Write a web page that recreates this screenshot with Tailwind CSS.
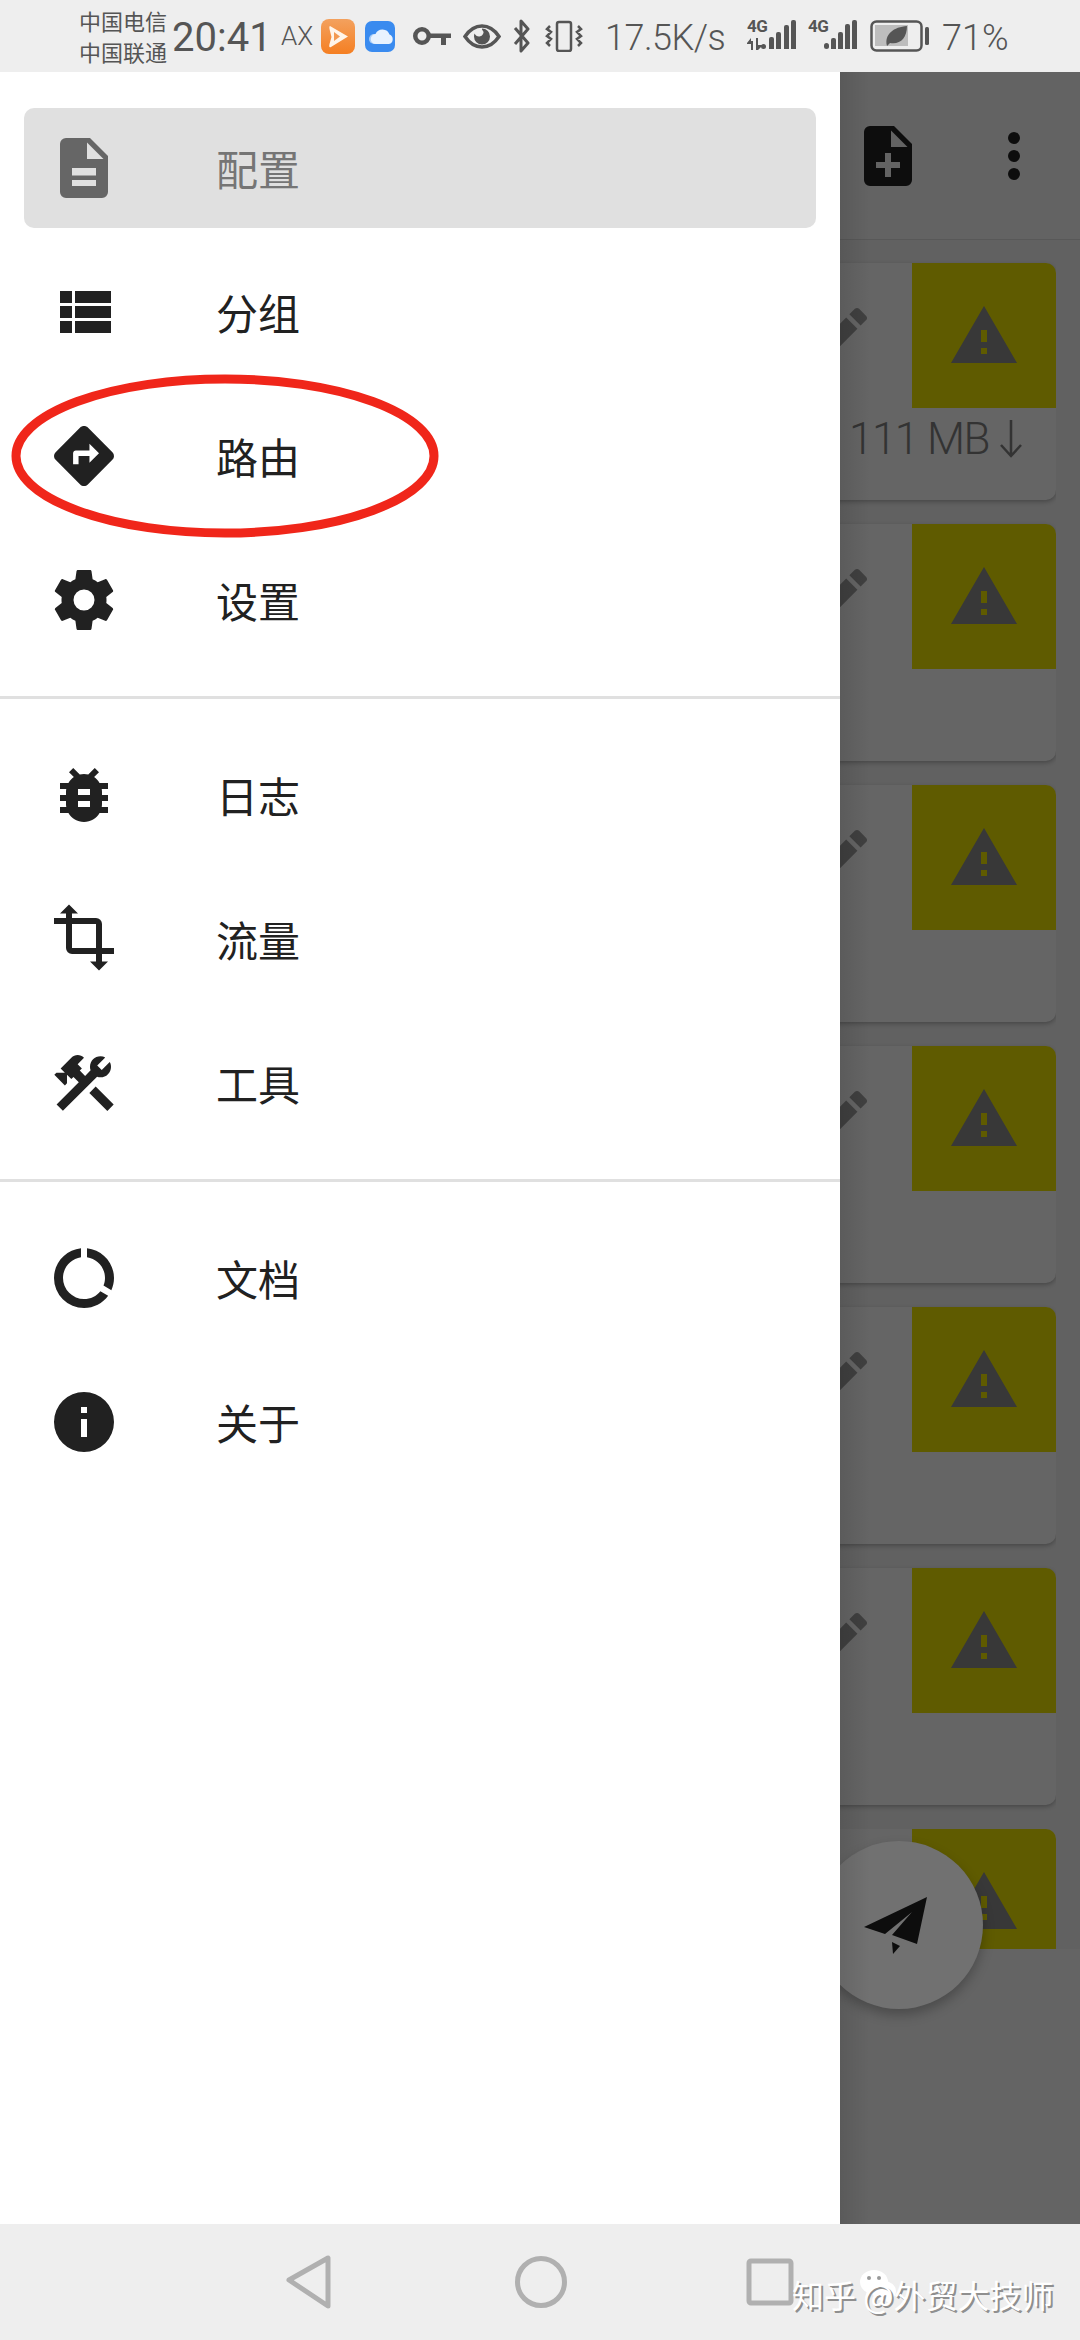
<!DOCTYPE html>
<html lang="zh">
<head>
    <meta charset="UTF-8">
    <meta name="viewport" content="width=device-width, initial-scale=1.0">
    <title>Drawer</title>
    <script src="https://cdn.jsdelivr.net/npm/@tailwindcss/browser@4"></script>
</head>
<body class="bg-[#eeeeee] font-['Noto_Sans_CJK_SC',sans-serif]">
<div class="relative w-[1080px] h-[2340px] overflow-hidden flex flex-col">

    <!-- Status bar -->
    <header class="h-[72px] bg-[#eeeeee] flex items-center text-[#555555] shrink-0">
        <div class="ml-[79px] w-[88px] shrink-0 flex flex-col text-[22px] leading-[31px] font-['Noto_Sans_CJK_SC',sans-serif]">
            <span>中国电信</span>
            <span>中国联通</span>
        </div>
        <span class="ml-[5px] w-[98px] shrink-0 text-[40px] leading-none font-['Roboto',sans-serif] pt-[4px]">20:41</span>
        <span class="ml-[11px] w-[31px] shrink-0 text-[26px] leading-none font-['Roboto',sans-serif] font-light">AX</span>
        <!-- orange app -->
        <svg class="ml-[9px] w-[34px] h-[35px] shrink-0" viewBox="0 0 34 35">
            <defs><linearGradient id="og" x1="0" y1="0" x2="0" y2="1"><stop offset="0" stop-color="#f3a15e"/><stop offset="1" stop-color="#f57f22"/></linearGradient></defs>
            <rect width="34" height="35" rx="8" fill="url(#og)"/>
            <path d="M9 7l18 10.500L10 28c-2 1-2-1-1.500-3l2-7-2-8c-.3-2 0-3 .5-3z" fill="#fff5ea"/>
            <path d="M13 13l6 4.500-6 4.500z" fill="#f39a52"/>
        </svg>
        <!-- blue app -->
        <svg class="ml-[10px] w-[30px] h-[31px] shrink-0" viewBox="0 0 30 31">
            <rect width="30" height="31" rx="7" fill="#3a8bef"/>
            <circle cx="9" cy="18" r="5" fill="#a9cdf7"/>
            <path d="M11 23a5 5 0 0 1-.5-10 7.500 7.500 0 0 1 14 .5A5 5 0 0 1 24 23z" fill="#e8f2fe"/>
        </svg>
        <!-- key -->
        <svg class="ml-[18px] w-[38px] h-[18px] shrink-0" viewBox="0 0 38 18" fill="#555555">
            <path fill-rule="evenodd" d="M9 0a9 9 0 1 1 0 18A9 9 0 0 1 9 0zm0 4.500a4.500 4.500 0 1 0 0 9 4.500 4.500 0 0 0 0-9z"/>
            <path d="M16 6.500h22v4.500h-5v7h-5v-7H16z"/>
        </svg>
        <!-- eye -->
        <svg class="ml-[12px] w-[38px] h-[25px] shrink-0" viewBox="0 0 38 25">
            <path d="M2 12.500C7 5 13 2 19 2s12 3 17 10.500C31 20 25 23 19 23S7 20 2 12.500z" fill="none" stroke="#555555" stroke-width="3.500"/>
            <path fill-rule="evenodd" d="M19 4.500a8 8 0 1 1-8 8c0-1 .2-2 .5-3 1 2 2.500 3 4.500 3a4 4 0 0 0 3-7z" fill="#555555"/>
        </svg>
        <!-- bluetooth -->
        <svg class="ml-[12px] w-[17px] h-[34px] shrink-0" viewBox="0 0 17 34" fill="none" stroke="#555555" stroke-width="3" stroke-linejoin="round">
            <path d="M2 9l13 15-7 8V2l7 8L2 25"/>
        </svg>
        <!-- vibrate -->
        <svg class="ml-[15px] w-[38px] h-[32px] shrink-0" viewBox="0 0 38 32" fill="none" stroke="#555555" stroke-width="2.500">
            <rect x="12" y="2" width="14" height="29" rx="2"/>
            <path d="M5 6L2 9l4 3-4 4 4 3-4 4 3 3M33 6l3 3-4 3 4 4-4 3 4 4-3 3"/>
        </svg>
        <span class="ml-[22px] w-[119px] shrink-0 text-[36px] tracking-[-0.5px] leading-none font-['Roboto',sans-serif] font-light pt-[3px] whitespace-nowrap">17.5K/s</span>
        <!-- signal 1 -->
        <div class="relative ml-[23px] w-[49px] h-[32px] shrink-0">
            <span class="absolute left-0 top-[-2px] text-[17px] leading-[17px] font-bold font-['Roboto',sans-serif] tracking-[-0.5px]">4G</span>
            <svg class="absolute left-0 top-[18px] w-[17px] h-[12px]" viewBox="0 0 17 12" fill="#555555">
                <path d="M0 5l4-5v3h2v9H4V6H0zM9 0h2v7h5l-5 5H9z"/>
            </svg>
            <div class="absolute right-0 bottom-[3px] flex items-end gap-[2.5px]">
                <i class="block w-[5px] h-[5px] rounded-full bg-[#555555]"></i>
                <i class="block w-[5px] h-[12px] rounded-t-[2px] bg-[#555555]"></i>
                <i class="block w-[5px] h-[17px] rounded-t-[2px] bg-[#555555]"></i>
                <i class="block w-[5px] h-[24px] rounded-t-[2px] bg-[#555555]"></i>
                <i class="block w-[5px] h-[29px] rounded-t-[2px] bg-[#555555]"></i>
            </div>
        </div>
        <!-- signal 2 -->
        <div class="relative ml-[12px] w-[49px] h-[32px] shrink-0">
            <span class="absolute left-0 top-[-2px] text-[17px] leading-[17px] font-bold font-['Roboto',sans-serif] tracking-[-0.5px]">4G</span>
            <div class="absolute right-0 bottom-[3px] flex items-end gap-[2px]">
                <i class="block w-[5px] h-[6px] rounded-full bg-[#555555]"></i>
                <i class="block w-[5px] h-[11px] rounded-t-[2px] bg-[#555555]"></i>
                <i class="block w-[5px] h-[17px] rounded-t-[2px] bg-[#555555]"></i>
                <i class="block w-[5px] h-[25px] rounded-t-[2px] bg-[#555555]"></i>
                <i class="block w-[5px] h-[29px] rounded-t-[2px] bg-[#555555]"></i>
            </div>
        </div>
        <!-- battery -->
        <svg class="ml-[13px] w-[59px] h-[32px] shrink-0" viewBox="0 0 59 32">
            <rect x="1.500" y="1.500" width="50" height="29" rx="5" fill="none" stroke="#555555" stroke-width="2.500"/>
            <rect x="5" y="5" width="33" height="21" fill="#bdbdbd"/>
            <path d="M17 26c-3-12 7-19 20-20 0 12-7 19-17 17z" fill="#555555"/>
            <rect x="55" y="7" width="4" height="18" rx="1.500" fill="#555555"/>
        </svg>
        <span class="ml-[13px] text-[36px] leading-none font-['Roboto',sans-serif] font-light pt-[3px]">71%</span>
    </header>

    <!-- Main -->
    <main class="flex flex-1 min-h-0">
        <!-- Drawer -->
        <aside class="relative w-[840px] shrink-0 bg-white pt-[24px] text-[42px] leading-none text-[#212121]">
            <nav class="flex flex-col">
                <a class="relative h-[144px] flex items-center text-[#757575]">
                    <span class="absolute left-[24px] right-[24px] top-[12px] h-[120px] bg-[#e0e0e0] rounded-[10px]"></span>
                    <svg class="relative ml-[48px] w-[72px] h-[72px]" viewBox="0 0 24 24" fill="#666666" fill-rule="evenodd"><path d="M14 2H6a2 2 0 0 0-2 2v16a2 2 0 0 0 2 2h12a2 2 0 0 0 2-2V8l-6-6zM13 9V3.500L18.500 9H13zM8 12h8v2.500H8zM8 16h8v2H8z"/></svg>
                    <span class="relative ml-[96px]">配置</span>
                </a>
                <a class="h-[144px] flex items-center">
                    <svg class="ml-[48px] w-[72px] h-[72px]" viewBox="0 0 24 24" fill="#212121"><path d="M9,5V9H21V5M9,19H21V15H9M9,14H21V10H9M4,9H8V5H4M4,19H8V15H4M4,14H8V10H4V14Z"/></svg>
                    <span class="ml-[96px]">分组</span>
                </a>
                <a class="h-[144px] flex items-center">
                    <svg class="ml-[48px] w-[72px] h-[72px]" viewBox="-1.200 -1.200 26.400 26.400" fill="#212121"><path d="M22.430 10.590l-9.010-9.010c-.75-.75-2.070-.76-2.830 0l-9 9c-.78.78-.78 2.040 0 2.830l9 9c.39.39.9.59 1.410.59.51 0 1.020-.2 1.410-.59l8.990-8.990c.79-.76.8-2.020.03-2.830zM14 14.500V12h-4v3H8v-4c0-.55.45-1 1-1h5V7.500l3.500 3.500-3.500 3.500z"/></svg>
                    <span class="ml-[96px]">路由</span>
                </a>
                <a class="h-[144px] flex items-center">
                    <svg class="ml-[48px] w-[72px] h-[72px]" viewBox="0 0 24 24" fill="#212121"><path d="M12,15.500A3.500,3.500 0 0,1 8.500,12A3.500,3.500 0 0,1 12,8.500A3.500,3.500 0 0,1 15.500,12A3.500,3.500 0 0,1 12,15.500M19.430,12.970C19.470,12.650 19.500,12.330 19.500,12C19.500,11.670 19.470,11.340 19.430,11L21.540,9.370C21.730,9.220 21.780,8.950 21.660,8.730L19.660,5.270C19.540,5.050 19.270,4.960 19.050,5.050L16.560,6.050C16.040,5.660 15.500,5.320 14.870,5.070L14.500,2.420C14.460,2.180 14.250,2 14,2H10C9.750,2 9.540,2.180 9.500,2.420L9.130,5.070C8.500,5.320 7.960,5.660 7.440,6.050L4.950,5.050C4.730,4.960 4.460,5.050 4.340,5.270L2.340,8.730C2.210,8.950 2.270,9.220 2.460,9.370L4.570,11C4.530,11.340 4.500,11.670 4.500,12C4.500,12.330 4.530,12.650 4.570,12.970L2.460,14.630C2.270,14.780 2.210,15.050 2.340,15.270L4.340,18.730C4.460,18.950 4.730,19.030 4.950,18.950L7.440,17.940C7.960,18.340 8.500,18.680 9.130,18.930L9.500,21.580C9.540,21.820 9.750,22 10,22H14C14.250,22 14.460,21.820 14.500,21.580L14.870,18.930C15.500,18.670 16.040,18.340 16.560,17.940L19.050,18.950C19.270,19.030 19.540,18.950 19.660,18.730L21.660,15.270C21.780,15.050 21.730,14.780 21.540,14.630L19.430,12.970Z"/></svg>
                    <span class="ml-[96px]">设置</span>
                </a>
            </nav>

            <hr class="my-[24px] border-t-[3px] border-[#e0e0e0]">

            <nav class="flex flex-col">
                <a class="h-[144px] flex items-center">
                    <svg class="ml-[48px] w-[72px] h-[72px]" viewBox="0 0 24 24" fill="#212121"><path d="M14,12H10V10H14M14,16H10V14H14M20,8H17.190C16.740,7.220 16.120,6.550 15.370,6.040L17,4.410L15.590,3L13.420,5.170C12.960,5.060 12.500,5 12,5C11.500,5 11.040,5.060 10.590,5.170L8.410,3L7,4.410L8.620,6.040C7.880,6.550 7.260,7.220 6.810,8H4V10H6.090C6.040,10.330 6,10.660 6,11V12H4V14H6V15C6,15.340 6.040,15.670 6.090,16H4V18H6.810C7.850,19.790 9.780,21 12,21C14.220,21 16.150,19.790 17.190,18H20V16H17.910C17.960,15.670 18,15.340 18,15V14H20V12H18V11C18,10.660 17.960,10.330 17.910,10H20V8Z"/></svg>
                    <span class="ml-[96px]">日志</span>
                </a>
                <a class="h-[144px] flex items-center">
                    <svg class="ml-[48px] w-[72px] h-[72px]" viewBox="0 0 24 24" fill="#212121" fill-rule="evenodd"><path d="M7 .5L10 3.500H8V5h8a2 2 0 0 1 2 2v8h4v2h-4v2.500h2L17 22.500l-3-3h2V17H8a2 2 0 0 1-2-2V7H2V5h4V3.500H4zM8 7v8h8V7z"/></svg>
                    <span class="ml-[96px]">流量</span>
                </a>
                <a class="h-[144px] flex items-center">
                    <svg class="ml-[48px] w-[72px] h-[72px]" viewBox="0 0 24 24" fill="#212121"><path d="M13.780 15.300L19.780 21.300L21.890 19.140L15.890 13.140L13.780 15.300M17.500 10.100C17.110 10.100 16.690 10.050 16.360 9.910L4.970 21.250L2.860 19.140L10.270 11.740L8.500 9.960L7.780 10.660L6.330 9.250V12.110L5.630 12.810L2.110 9.250L2.810 8.550H5.620L4.220 7.140L7.780 3.580C8.950 2.410 10.830 2.410 12 3.580L9.890 5.740L11.300 7.140L10.590 7.850L12.380 9.630L14.200 7.750C14.060 7.420 14 7 14 6.630C14 4.660 15.560 3.110 17.500 3.110C18.090 3.110 18.610 3.250 19.080 3.530L16.410 6.200L17.910 7.700L20.580 5.030C20.860 5.500 21 6 21 6.630C21 8.550 19.450 10.100 17.500 10.100Z"/></svg>
                    <span class="ml-[96px]">工具</span>
                </a>
            </nav>

            <hr class="my-[24px] border-t-[3px] border-[#e0e0e0]">

            <nav class="flex flex-col">
                <a class="h-[144px] flex items-center">
                    <svg class="ml-[48px] w-[72px] h-[72px]" viewBox="0 0 24 24" fill="#212121"><path d="M13,2.050V5.080C16.390,5.570 19,8.470 19,12C19,12.900 18.820,13.750 18.500,14.540L21.120,16.070C21.680,14.830 22,13.450 22,12C22,6.820 18.050,2.550 13,2.050M12,19A7,7 0 0,1 5,12C5,8.470 7.610,5.570 11,5.080V2.050C5.940,2.550 2,6.810 2,12A10,10 0 0,0 12,22C15.300,22 18.230,20.390 20.050,17.910L17.450,16.380C16.170,18 14.210,19 12,19Z"/></svg>
                    <span class="ml-[96px]">文档</span>
                </a>
                <a class="h-[144px] flex items-center">
                    <svg class="ml-[48px] w-[72px] h-[72px]" viewBox="0 0 24 24" fill="#212121"><path d="M13,9H11V7H13M13,17H11V11H13M12,2A10,10 0 0,0 2,12A10,10 0 0,0 12,22A10,10 0 0,0 22,12A10,10 0 0,0 12,2Z"/></svg>
                    <span class="ml-[96px]">关于</span>
                </a>
            </nav>

            <!-- hand-drawn red ring around 路由 -->
            <svg class="absolute left-0 top-[300px] w-[450px] h-[170px]" viewBox="0 0 450 170" fill="none">
                <ellipse cx="225" cy="84" rx="209" ry="77" stroke="#f0261a" stroke-width="9"/>
            </svg>
        </aside>

        <!-- Dimmed content behind the drawer -->
        <section class="relative flex-1 overflow-hidden bg-[#616161] flex flex-col">
            <div class="h-[168px] shrink-0 bg-[#636363] flex items-center border-b border-[#585858]">
                <svg class="ml-[12px] w-[72px] h-[72px]" viewBox="0 0 24 24" fill="#0d0d0d" fill-rule="evenodd"><path d="M14 2H6a2 2 0 0 0-2 2v16a2 2 0 0 0 2 2h12a2 2 0 0 0 2-2V8l-6-6zM13 9V3.500L18.500 9H13zM8 14h3v-3h2v3h3v2h-3v3h-2v-3H8z"/></svg>
                <svg class="ml-[54px] w-[72px] h-[72px]" viewBox="0 0 24 24" fill="#0d0d0d"><path d="M12,16A2,2 0 0,1 14,18A2,2 0 0,1 12,20A2,2 0 0,1 10,18A2,2 0 0,1 12,16M12,10A2,2 0 0,1 14,12A2,2 0 0,1 12,14A2,2 0 0,1 10,12A2,2 0 0,1 12,10M12,4A2,2 0 0,1 14,6A2,2 0 0,1 12,8A2,2 0 0,1 10,6A2,2 0 0,1 12,4Z"/></svg>
            </div>

            <div class="flex-1 min-h-0 flex flex-col gap-[24px] pt-[23px] mr-[24px] -ml-[100px] overflow-hidden">
                <div class="h-[237px] shrink-0 bg-[#656565] rounded-[10px] shadow-[0_2px_4px_rgba(0,0,0,0.25)]">
                    <div class="flex justify-end">
                        <svg class="mt-[36px] mr-[36px] w-[72px] h-[72px]" viewBox="0 0 24 24" fill="#404040"><path d="M20.710,7.040C21.100,6.650 21.100,6 20.710,5.630L18.370,3.290C18,2.900 17.350,2.900 16.960,3.290L15.120,5.120L18.870,8.870M3,17.250V21H6.750L17.810,9.930L14.060,6.180L3,17.250Z"/></svg>
                        <div class="w-[144px] h-[145px] bg-[#5f5b00] rounded-tr-[10px] flex items-center justify-center">
                            <svg class="w-[72px] h-[72px]" viewBox="0 0 24 24" fill="#383838"><path d="M13 14H11V10H13M13 18H11V16H13M1 21H23L12 2"/></svg>
                        </div>
                    </div>
                    <div class="flex justify-end items-center h-[52px] mt-[5px] pr-[34px] text-[#333333]">
                        <span class="text-[44px] tracking-[-1.5px] leading-[52px] font-['Roboto',sans-serif] font-light">111 MB</span>
                        <svg class="ml-[11px] w-[22px] h-[38px]" viewBox="0 0 22 38" fill="none" stroke="#333333" stroke-width="2.500"><path d="M11 0v36M1 25l10 11 10-11"/></svg>
                    </div>
                </div>
                <div class="h-[237px] shrink-0 bg-[#656565] rounded-[10px] shadow-[0_2px_4px_rgba(0,0,0,0.25)]">
                    <div class="flex justify-end">
                        <svg class="mt-[36px] mr-[36px] w-[72px] h-[72px]" viewBox="0 0 24 24" fill="#404040"><path d="M20.710,7.040C21.100,6.650 21.100,6 20.710,5.630L18.370,3.290C18,2.900 17.350,2.900 16.960,3.290L15.120,5.120L18.870,8.870M3,17.250V21H6.750L17.810,9.930L14.060,6.180L3,17.250Z"/></svg>
                        <div class="w-[144px] h-[145px] bg-[#5f5b00] rounded-tr-[10px] flex items-center justify-center">
                            <svg class="w-[72px] h-[72px]" viewBox="0 0 24 24" fill="#383838"><path d="M13 14H11V10H13M13 18H11V16H13M1 21H23L12 2"/></svg>
                        </div>
                    </div>
                </div>
                <div class="h-[237px] shrink-0 bg-[#656565] rounded-[10px] shadow-[0_2px_4px_rgba(0,0,0,0.25)]">
                    <div class="flex justify-end">
                        <svg class="mt-[36px] mr-[36px] w-[72px] h-[72px]" viewBox="0 0 24 24" fill="#404040"><path d="M20.710,7.040C21.100,6.650 21.100,6 20.710,5.630L18.370,3.290C18,2.900 17.350,2.900 16.960,3.290L15.120,5.120L18.870,8.870M3,17.250V21H6.750L17.810,9.930L14.060,6.180L3,17.250Z"/></svg>
                        <div class="w-[144px] h-[145px] bg-[#5f5b00] rounded-tr-[10px] flex items-center justify-center">
                            <svg class="w-[72px] h-[72px]" viewBox="0 0 24 24" fill="#383838"><path d="M13 14H11V10H13M13 18H11V16H13M1 21H23L12 2"/></svg>
                        </div>
                    </div>
                </div>
                <div class="h-[237px] shrink-0 bg-[#656565] rounded-[10px] shadow-[0_2px_4px_rgba(0,0,0,0.25)]">
                    <div class="flex justify-end">
                        <svg class="mt-[36px] mr-[36px] w-[72px] h-[72px]" viewBox="0 0 24 24" fill="#404040"><path d="M20.710,7.040C21.100,6.650 21.100,6 20.710,5.630L18.370,3.290C18,2.900 17.350,2.900 16.960,3.290L15.120,5.120L18.870,8.870M3,17.250V21H6.750L17.810,9.930L14.060,6.180L3,17.250Z"/></svg>
                        <div class="w-[144px] h-[145px] bg-[#5f5b00] rounded-tr-[10px] flex items-center justify-center">
                            <svg class="w-[72px] h-[72px]" viewBox="0 0 24 24" fill="#383838"><path d="M13 14H11V10H13M13 18H11V16H13M1 21H23L12 2"/></svg>
                        </div>
                    </div>
                </div>
                <div class="h-[237px] shrink-0 bg-[#656565] rounded-[10px] shadow-[0_2px_4px_rgba(0,0,0,0.25)]">
                    <div class="flex justify-end">
                        <svg class="mt-[36px] mr-[36px] w-[72px] h-[72px]" viewBox="0 0 24 24" fill="#404040"><path d="M20.710,7.040C21.100,6.650 21.100,6 20.710,5.630L18.370,3.290C18,2.900 17.350,2.900 16.960,3.290L15.120,5.120L18.870,8.870M3,17.250V21H6.750L17.810,9.930L14.060,6.180L3,17.250Z"/></svg>
                        <div class="w-[144px] h-[145px] bg-[#5f5b00] rounded-tr-[10px] flex items-center justify-center">
                            <svg class="w-[72px] h-[72px]" viewBox="0 0 24 24" fill="#383838"><path d="M13 14H11V10H13M13 18H11V16H13M1 21H23L12 2"/></svg>
                        </div>
                    </div>
                </div>
                <div class="h-[237px] shrink-0 bg-[#656565] rounded-[10px] shadow-[0_2px_4px_rgba(0,0,0,0.25)]">
                    <div class="flex justify-end">
                        <svg class="mt-[36px] mr-[36px] w-[72px] h-[72px]" viewBox="0 0 24 24" fill="#404040"><path d="M20.710,7.040C21.100,6.650 21.100,6 20.710,5.630L18.370,3.290C18,2.900 17.350,2.900 16.960,3.290L15.120,5.120L18.870,8.870M3,17.250V21H6.750L17.810,9.930L14.060,6.180L3,17.250Z"/></svg>
                        <div class="w-[144px] h-[145px] bg-[#5f5b00] rounded-tr-[10px] flex items-center justify-center">
                            <svg class="w-[72px] h-[72px]" viewBox="0 0 24 24" fill="#383838"><path d="M13 14H11V10H13M13 18H11V16H13M1 21H23L12 2"/></svg>
                        </div>
                    </div>
                </div>
                <div class="h-[237px] shrink-0 bg-[#656565] rounded-[10px]">
                    <div class="flex justify-end">
                        <svg class="mt-[36px] mr-[36px] w-[72px] h-[72px]" viewBox="0 0 24 24" fill="#404040"><path d="M20.710,7.040C21.100,6.650 21.100,6 20.710,5.630L18.370,3.290C18,2.900 17.350,2.900 16.960,3.290L15.120,5.120L18.870,8.870M3,17.250V21H6.750L17.810,9.930L14.060,6.180L3,17.250Z"/></svg>
                        <div class="w-[144px] h-[145px] bg-[#5f5b00] rounded-tr-[10px] flex items-center justify-center">
                            <svg class="w-[72px] h-[72px]" viewBox="0 0 24 24" fill="#383838"><path d="M13 14H11V10H13M13 18H11V16H13M1 21H23L12 2"/></svg>
                        </div>
                    </div>
                </div>
            </div>

            <!-- bottom sheet -->
            <div class="absolute left-0 right-0 top-[1877px] bottom-0 bg-[#646464]"></div>

            <!-- FAB -->
            <div class="absolute left-[-25px] top-[1769px] w-[168px] h-[168px] rounded-full bg-[#717171] shadow-[0_6px_12px_rgba(0,0,0,0.25)] flex items-center justify-center">
                <svg class="w-[72px] h-[72px]" viewBox="0 0 72 72" fill="#0d0d0d">
                    <path d="M64 8L1 38l21 7 27-22-20 23 25 9z"/>
                    <path d="M29 53l8 4-7 8z"/>
                </svg>
            </div>

            <!-- drawer shadow -->
            <div class="absolute left-0 top-0 bottom-0 w-[30px] bg-gradient-to-r from-black/10 to-transparent"></div>
        </section>
    </main>

    <!-- Navigation bar -->
    <footer class="relative h-[116px] shrink-0 bg-[#eeeeee]">
        <svg class="absolute left-[285px] top-[31px] w-[48px] h-[54px]" viewBox="0 0 48 54" fill="none" stroke="#b0b0b0" stroke-width="5" stroke-linejoin="round">
            <path d="M43 3v48L4 25z"/>
        </svg>
        <svg class="absolute left-[514px] top-[31px] w-[54px] h-[54px]" viewBox="0 0 54 54" fill="none" stroke="#b0b0b0" stroke-width="5">
            <circle cx="27" cy="27" r="23.500"/>
        </svg>
        <svg class="absolute left-[746px] top-[34px] w-[48px] h-[48px]" viewBox="0 0 48 48" fill="none" stroke="#b0b0b0" stroke-width="5" stroke-linejoin="round">
            <rect x="3" y="3" width="42" height="42" rx="2"/>
        </svg>
        <!-- watermark -->
        <svg class="absolute left-[859px] top-[44px] w-[38px] h-[38px]" viewBox="0 0 38 38" fill="#ffffff">
            <ellipse cx="15" cy="14" rx="14" ry="12"/>
            <path d="M8 23l-2 7 8-4z"/>
            <ellipse cx="25" cy="23" rx="12" ry="10"/>
            <path d="M31 30l3 6-8-3z"/>
            <circle cx="10" cy="10" r="2" fill="#9a9a9a"/>
            <circle cx="20" cy="10" r="2" fill="#9a9a9a"/>
        </svg>
        <span class="absolute left-[792px] top-[50px] text-[32px] leading-[40px] text-white whitespace-nowrap [text-shadow:2px_2px_0_#8f8f8f]">知乎 @外贸大技师</span>
    </footer>
</div>
</body>
</html>
